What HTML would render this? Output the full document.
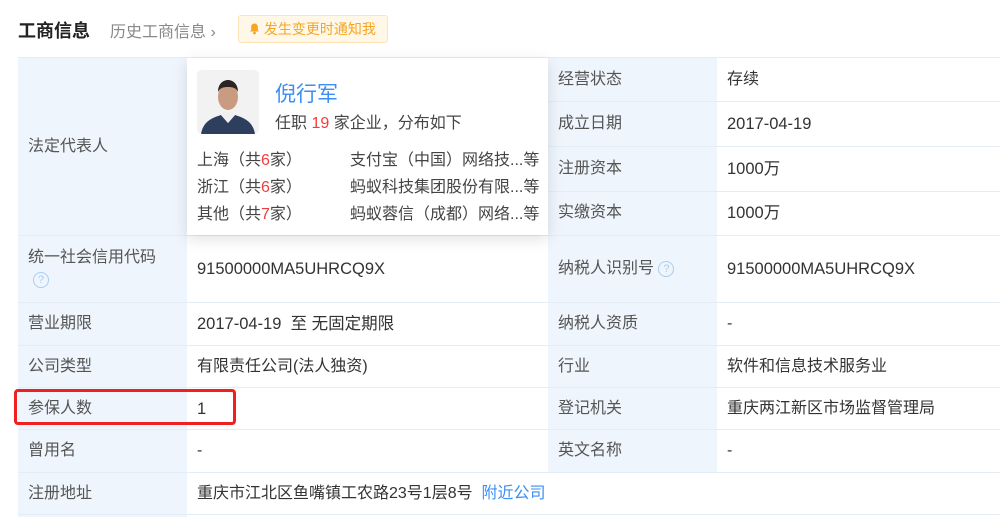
<!DOCTYPE html>
<html><head><meta charset="utf-8"><style>
*{margin:0;padding:0;box-sizing:border-box}
body{width:1000px;height:517px;overflow:hidden;background:#fff;font-family:"Liberation Sans","Noto Sans CJK SC",sans-serif;position:relative;color:#333}
.a{position:absolute;white-space:nowrap}
.lb{position:absolute;background:#eef5fc}
.hl{position:absolute;height:1px;background:#e4ecf5}
.t{position:absolute;font-size:16px;white-space:nowrap;line-height:20px}
.l{color:#555}
.n{font-size:16.5px}
</style></head><body>
<div class="a" style="left:18px;top:17px;font-size:18px;font-weight:bold;color:#222">工商信息</div>
<div class="a" style="left:110px;top:18px;font-size:16px;color:#888">历史工商信息 ›</div>
<div class="a" style="left:238px;top:15px;width:150px;height:28px;background:#fff7e8;border:1px solid #ffe3b5;border-radius:3px;font-size:14px;color:#f5a623;line-height:26px;padding-left:10px">
<svg width="11" height="12" viewBox="0 0 11 12" style="vertical-align:-1px"><path d="M5.5 0.5c-2 0-3.3 1.5-3.3 3.5v3L1 8.5h9L8.8 7V4c0-2-1.3-3.5-3.3-3.5z" fill="#f5a623"/><circle cx="5.5" cy="10" r="1.4" fill="#f5a623"/></svg> 发生变更时通知我</div>

<div class="lb" style="left:18px;top:57px;width:169px;height:460px"></div>
<div class="lb" style="left:548px;top:57px;width:169px;height:415px"></div>
<div class="hl" style="left:18px;top:57px;width:982px"></div>
<div class="hl" style="left:548px;top:101px;width:452px"></div>
<div class="hl" style="left:548px;top:146px;width:452px"></div>
<div class="hl" style="left:548px;top:191px;width:452px"></div>
<div class="hl" style="left:18px;top:235px;width:982px"></div>
<div class="hl" style="left:18px;top:302px;width:982px"></div>
<div class="hl" style="left:18px;top:345px;width:982px"></div>
<div class="hl" style="left:18px;top:387px;width:982px"></div>
<div class="hl" style="left:18px;top:429px;width:982px"></div>
<div class="hl" style="left:18px;top:472px;width:982px"></div>
<div class="hl" style="left:18px;top:514px;width:982px"></div>

<div class="t l" style="left:28px;top:137px">法定代表人</div>
<div class="t l" style="left:28px;top:248px">统一社会信用代码</div>
<div class="a" style="left:33px;top:272px;width:16px;height:16px;border:1px solid #a9cdef;border-radius:50%;font-size:11px;color:#a9cdef;text-align:center;line-height:14px">?</div>
<div class="t n" style="left:197px;top:259px">91500000MA5UHRCQ9X</div>
<div class="t l" style="left:28px;top:314px">营业期限</div>
<div class="t n" style="left:197px;top:314px">2017-04-19 &nbsp;至 无固定期限</div>
<div class="t l" style="left:28px;top:357px">公司类型</div>
<div class="t" style="left:197px;top:357px">有限责任公司(法人独资)</div>
<div class="t l" style="left:28px;top:399px">参保人数</div>
<div class="t n" style="left:197px;top:399px">1</div>
<div class="t l" style="left:28px;top:441px">曾用名</div>
<div class="t" style="left:197px;top:441px">-</div>
<div class="t l" style="left:28px;top:484px">注册地址</div>
<div class="t" style="left:197px;top:484px">重庆市江北区鱼嘴镇工农路23号1层8号 <span style="color:#3a8ef6">&nbsp;附近公司</span></div>

<div class="t l" style="left:558px;top:70px">经营状态</div>
<div class="t" style="left:727px;top:70px">存续</div>
<div class="t l" style="left:558px;top:114px">成立日期</div>
<div class="t n" style="left:727px;top:114px">2017-04-19</div>
<div class="t l" style="left:558px;top:159px">注册资本</div>
<div class="t n" style="left:727px;top:159px">1000万</div>
<div class="t l" style="left:558px;top:203px">实缴资本</div>
<div class="t n" style="left:727px;top:203px">1000万</div>
<div class="t l" style="left:558px;top:259px">纳税人识别号 <span style="display:inline-block;width:16px;height:16px;border:1px solid #a9cdef;border-radius:50%;font-size:11px;color:#a9cdef;text-align:center;line-height:14px;vertical-align:1px">?</span></div>
<div class="t n" style="left:727px;top:259px">91500000MA5UHRCQ9X</div>
<div class="t l" style="left:558px;top:314px">纳税人资质</div>
<div class="t" style="left:727px;top:314px">-</div>
<div class="t l" style="left:558px;top:357px">行业</div>
<div class="t" style="left:727px;top:357px">软件和信息技术服务业</div>
<div class="t l" style="left:558px;top:399px">登记机关</div>
<div class="t" style="left:727px;top:399px">重庆两江新区市场监督管理局</div>
<div class="t l" style="left:558px;top:441px">英文名称</div>
<div class="t" style="left:727px;top:441px">-</div>

<div class="a" style="left:14px;top:389px;width:222px;height:36px;border:3px solid #f02020;border-radius:4px"></div>

<div class="a" style="left:187px;top:58px;width:361px;height:177px;background:#fff;box-shadow:0 4px 14px rgba(0,0,0,0.12)">
<div class="a" style="left:10px;top:12px;width:62px;height:64px;border-radius:5px;background:#f3f3f3;overflow:hidden">
<svg width="62" height="64" viewBox="0 0 62 64"><rect width="62" height="64" fill="#f2f2f2"/><path d="M4 64c2-12 10-16 20-19l7 8 7-8c10 3 18 7 20 19z" fill="#2e3f5e"/><path d="M24 45l7 8 7-8-3-3h-8z" fill="#eef0f2"/><ellipse cx="31" cy="27" rx="10" ry="13" fill="#c99b80"/><path d="M21 22c0-9 6-12 10-12s10 3 10 12c-2-4-5-5-10-5s-8 1-10 5z" fill="#2a2522"/></svg>
</div>
<div class="a" style="left:88px;top:20px;font-size:21px;color:#3a8ef6">倪行军</div>
<div class="a" style="left:88px;top:51px;font-size:16px;color:#444">任职 <span style="color:#f03c3c">19</span> 家企业，分布如下</div>
<div class="a" style="left:10px;top:89px;font-size:16px;line-height:27px;color:#444">上海（共<span style="color:#f03c3c">6</span>家）<br>浙江（共<span style="color:#f03c3c">6</span>家）<br>其他（共<span style="color:#f03c3c">7</span>家）</div>
<div class="a" style="left:163px;top:89px;font-size:16px;line-height:27px;color:#444">支付宝（中国）网络技...等<br>蚂蚁科技集团股份有限...等<br>蚂蚁蓉信（成都）网络...等</div>
</div>
</body></html>
